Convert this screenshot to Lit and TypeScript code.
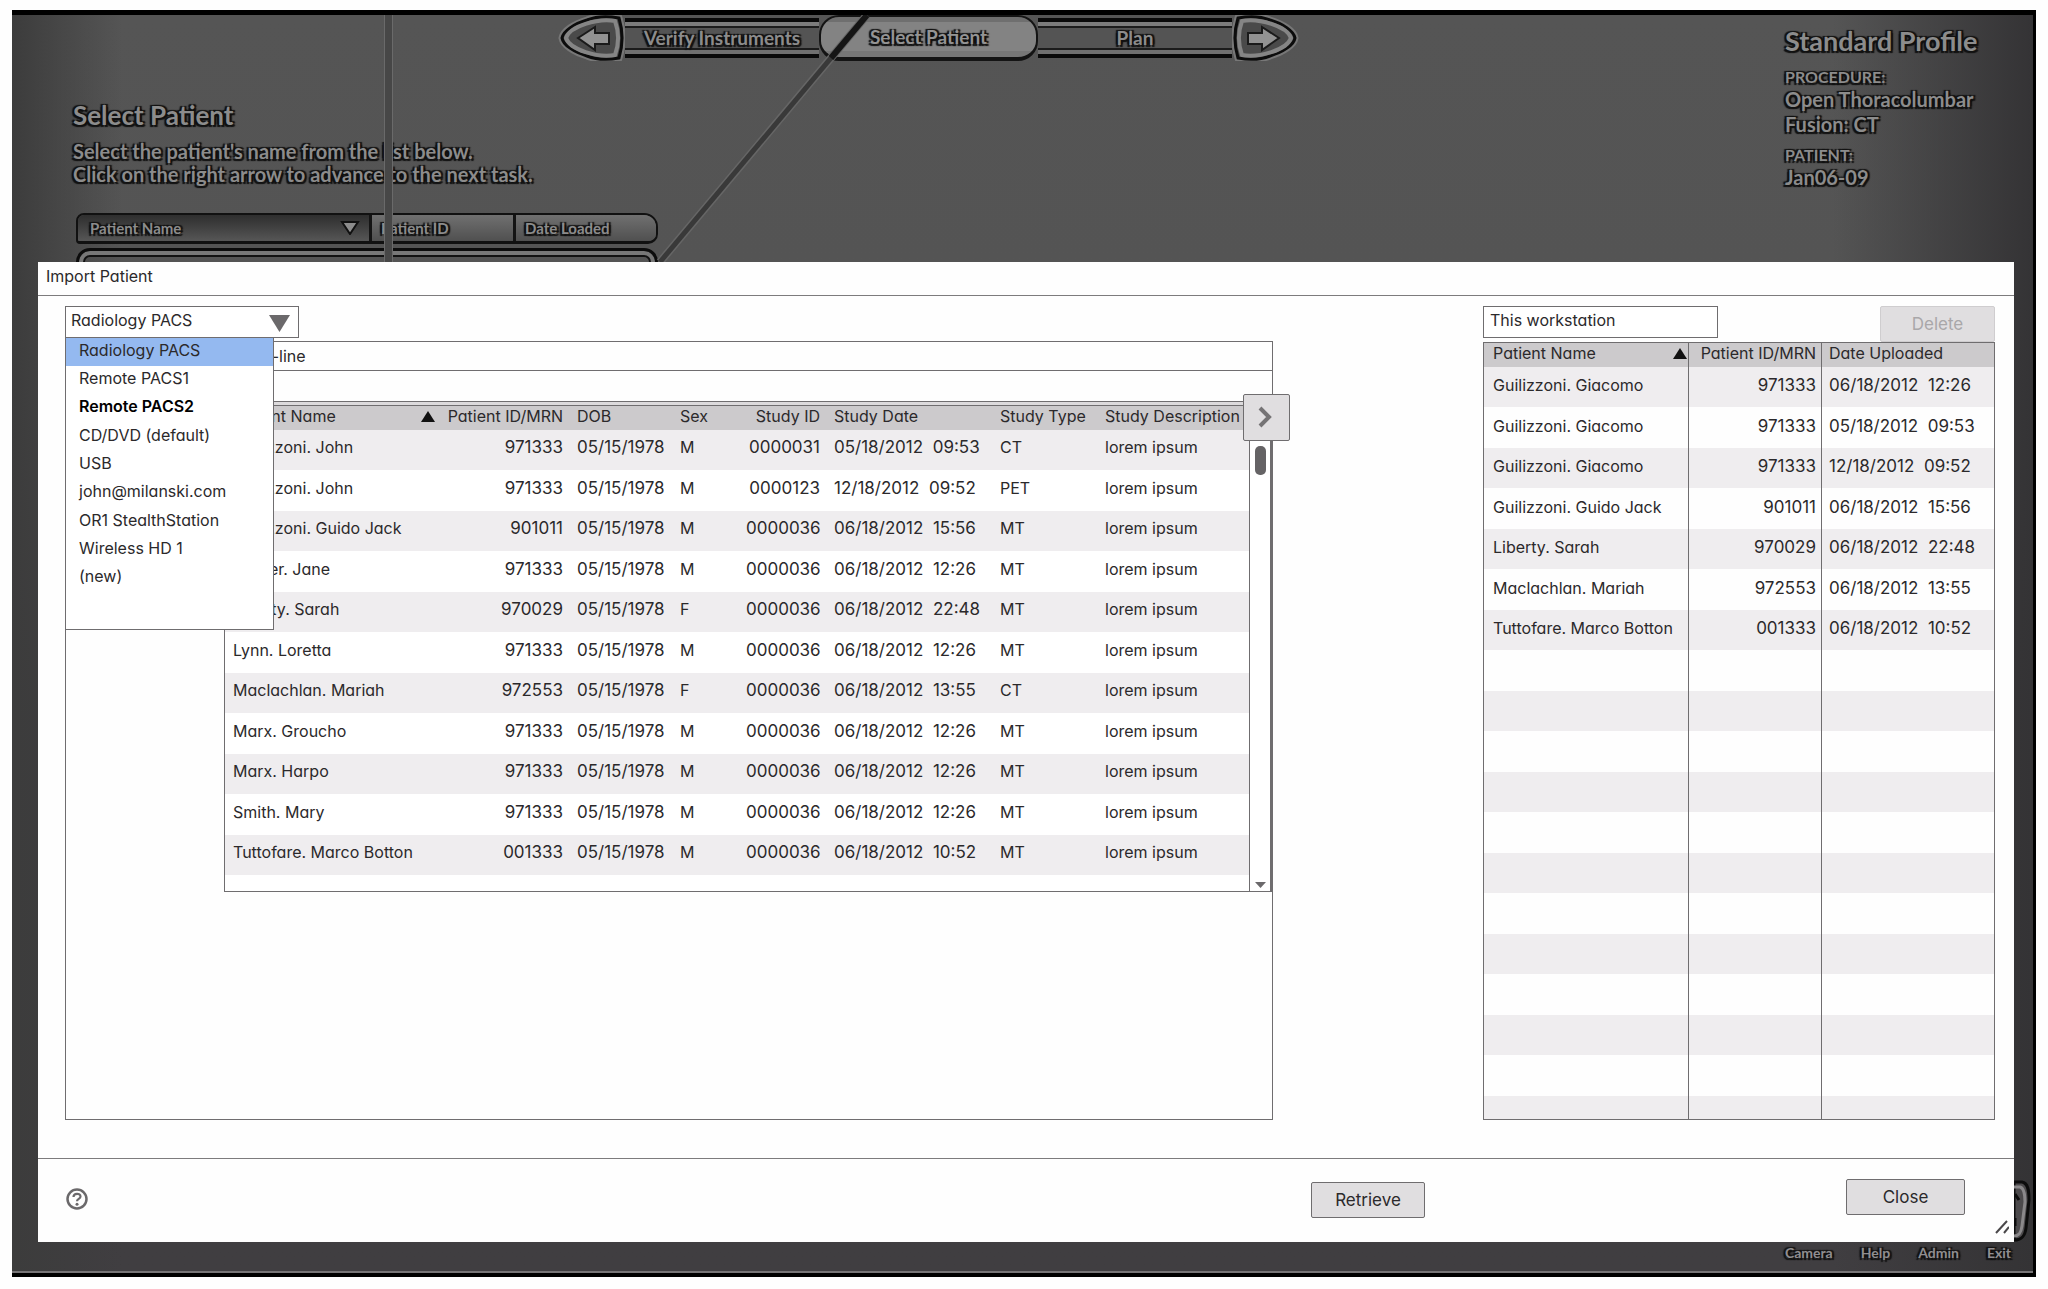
import { LitElement, html, css, svg, nothing } from "lit";
import { customElement, state, property } from "lit/decorators.js";
import { classMap } from "lit/directives/class-map.js";

type Study = [string, string, string, string, string, string, string];

const STUDIES: Study[] = [
  ["Guilizzoni. John", "971333", "M", "0000031", "05/18/2012", "09:53", "CT"],
  ["Guilizzoni. John", "971333", "M", "0000123", "12/18/2012", "09:52", "PET"],
  ["Guilizzoni. Guido Jack", "901011", "M", "0000036", "06/18/2012", "15:56", "MT"],
  ["Hunter. Jane", "971333", "M", "0000036", "06/18/2012", "12:26", "MT"],
  ["Liberty. Sarah", "970029", "F", "0000036", "06/18/2012", "22:48", "MT"],
  ["Lynn. Loretta", "971333", "M", "0000036", "06/18/2012", "12:26", "MT"],
  ["Maclachlan. Mariah", "972553", "F", "0000036", "06/18/2012", "13:55", "CT"],
  ["Marx. Groucho", "971333", "M", "0000036", "06/18/2012", "12:26", "MT"],
  ["Marx. Harpo", "971333", "M", "0000036", "06/18/2012", "12:26", "MT"],
  ["Smith. Mary", "971333", "M", "0000036", "06/18/2012", "12:26", "MT"],
  ["Tuttofare. Marco Botton", "001333", "M", "0000036", "06/18/2012", "10:52", "MT"],
];

const UPLOADS: [string, string, string, string][] = [
  ["Guilizzoni. Giacomo", "971333", "06/18/2012", "12:26"],
  ["Guilizzoni. Giacomo", "971333", "05/18/2012", "09:53"],
  ["Guilizzoni. Giacomo", "971333", "12/18/2012", "09:52"],
  ["Guilizzoni. Guido Jack", "901011", "06/18/2012", "15:56"],
  ["Liberty. Sarah", "970029", "06/18/2012", "22:48"],
  ["Maclachlan. Mariah", "972553", "06/18/2012", "13:55"],
  ["Tuttofare. Marco Botton", "001333", "06/18/2012", "10:52"],
];

const BLANK_ROWS = 12;

const SOURCES = [
  "Radiology PACS",
  "Remote PACS1",
  "Remote PACS2",
  "CD/DVD (default)",
  "USB",
  "john@milanski.com",
  "OR1 StealthStation",
  "Wireless HD 1",
  "(new)",
];

const sketchText = css`
  :host,
  button,
  input,
  select {
    font-family: Inter, "Liberation Sans", sans-serif;
    font-feature-settings: "cv11";
    font-size: 16px;
    line-height: 20px;
    color: #2b292b;
  }
  button,
  input,
  select {
    margin: 0;
    box-sizing: border-box;
  }
`;

const tableText = css`
  table {
    border-collapse: separate;
    border-spacing: 0;
    table-layout: fixed;
    width: 100%;
  }
  th,
  td {
    box-sizing: border-box;
    padding: 0 7px;
    text-align: left;
    font-weight: 400;
    white-space: pre;
  }
  th {
    height: 24px;
    padding-bottom: 4px;
    background: #cccacc;
  }
  td {
    height: 40px;
    padding-bottom: 4px;
  }
  tbody tr:nth-child(even) td {
    height: 41px;
  }
  tbody tr:nth-child(odd) td {
    background: #efedef;
  }
  .num {
    text-align: right;
  }
  .digits {
    font-size: 17px;
  }
  .sorted {
    display: flex;
    justify-content: space-between;
    align-items: center;
  }
`;

const sortMark = html`<svg width="14" height="12" viewBox="0 0 14 12" aria-hidden="true">
  <path d="M7 1 14 12H0Z" fill="#111" />
</svg>`;

@customElement("stealth-backdrop")
export class StealthBackdrop extends LitElement {
  static styles = css`
    :host {
      display: block;
      position: relative;
      height: 247px;
      overflow: hidden;
      font-family: Lato, "Open Sans", sans-serif;
      color: #8c8c8c;
    }
    .layout {
      display: grid;
      grid-template-columns: 546px 741px 1fr 248px;
      grid-template-rows: 65px 1fr;
    }
    h1,
    h2,
    p {
      margin: 0;
    }
    h1,
    h2,
    p,
    th,
    .step {
      text-shadow:
        -2px -1px 1px #111,
        2px -1px 1px #111,
        -2px 2px 1px #111,
        2px 2px 1px #111;
    }
    .nav {
      grid-area: 1 / 2;
      display: flex;
      align-items: center;
      align-self: start;
      height: 46px;
    }
    .nav button {
      padding: 0;
      border: 0;
      background: none;
      color: inherit;
      font-family: inherit;
    }
    .arrow {
      flex: none;
      width: 67px;
      height: 46px;
    }
    .arrow svg {
      display: block;
    }
    .nav .step {
      flex: 1;
      height: 40px;
      box-sizing: border-box;
      border: solid #0a0a0a;
      border-width: 4px 0;
      background: linear-gradient(#7c7c7c 0 4px, #1c1c1c 4px 6px, #545454 6px 26px, #1c1c1c 26px 28px, #707070 28px);
      font-size: 19px;
      font-weight: 700;
      line-height: 28px;
    }
    .nav .current {
      flex: 0 0 219px;
      height: 46px;
      border: 2px solid #141414;
      border-bottom-width: 4px;
      border-radius: 20px;
      background: linear-gradient(#6f6f6f 0 5px, #838383 5px 34px, #777 34px);
      color: #949494;
    }
    .intro {
      grid-area: 2 / 1 / 3 / 3;
      padding: 17px 0 0 61px;
    }
    h1 {
      font-size: 26px;
      line-height: 36px;
      font-weight: 700;
    }
    .hint {
      font-size: 20px;
      line-height: 23px;
      font-weight: 700;
      padding-top: 7px;
    }
    table {
      width: 582px;
      margin: 27px 0 0 3px;
      border-collapse: separate;
      border-spacing: 0;
      table-layout: fixed;
      border: 2px solid #111;
      border-bottom-width: 3px;
      border-radius: 8px 14px 10px 4px;
      overflow: hidden;
    }
    th {
      height: 26px;
      box-sizing: border-box;
      padding: 0 9px;
      background: linear-gradient(#707070, #505050);
      border-right: 3px solid #141414;
      text-align: left;
      font-size: 15px;
      line-height: 20px;
      font-weight: 700;
    }
    th:first-child {
      background: linear-gradient(#2e2e2e, #565656);
      padding-left: 12px;
    }
    th:last-child {
      border-right: 0;
    }
    .sorted {
      display: flex;
      justify-content: space-between;
      align-items: center;
    }
    .list {
      width: 582px;
      height: 40px;
      box-sizing: border-box;
      margin: 4px 0 0 3px;
      border: 3px solid #0c0c0c;
      border-radius: 14px;
      box-shadow: inset 0 0 0 4px #777, inset 0 0 0 6px #111;
    }
    .profile {
      grid-area: 1 / 4 / 3 / 5;
      padding-top: 8px;
    }
    h2 {
      font-size: 27px;
      line-height: 36px;
      font-weight: 700;
    }
    .cap {
      font-size: 16px;
      line-height: 20px;
      font-weight: 700;
      padding-top: 8px;
    }
    .value {
      font-size: 20px;
      line-height: 25px;
      font-weight: 700;
    }
    .creases {
      position: absolute;
      inset: 0;
      width: 100%;
      height: 100%;
      pointer-events: none;
    }
  `;

  private arrow(flip: boolean) {
    const shape = svg`
      <path d="M61 3C50 1 39 1 29 5 16 9 5 16 4 23 5 30 16 37 29 41 39 45 50 45 61 43 65 30 65 16 61 3Z" fill="#555" stroke="#777" stroke-width="7"/>
      <path d="M61 3C50 1 39 1 29 5 16 9 5 16 4 23 5 30 16 37 29 41 39 45 50 45 61 43 65 30 65 16 61 3Z" fill="#4c4c4c" stroke="#0c0c0c" stroke-width="3"/>
      <path d="M57 6C40 3 12 11 8 23 12 35 40 43 57 40 61 29 61 17 57 6Z" fill="#4a4a4a" stroke="#858585" stroke-width="4"/>
      <path d="M20 23 37 12V18H51V29H37V35Z" fill="#929292" stroke="#1a1a1a" stroke-width="2"/>`;
    return html`<svg width="67" height="46" viewBox="0 0 67 46" aria-hidden="true">
      <g transform=${flip ? "translate(67 0) scale(-1 1)" : "translate(0 0)"}>${shape}</g>
    </svg>`;
  }

  render() {
    return html`
      <div class="layout">
        <nav class="nav" aria-label="Procedure steps">
          <button class="arrow" aria-label="Previous task">${this.arrow(false)}</button>
          <button class="step">Verify Instruments</button>
          <button class="step current" aria-current="step">Select Patient</button>
          <button class="step">Plan</button>
          <button class="arrow" aria-label="Next task">${this.arrow(true)}</button>
        </nav>
        <section class="intro">
          <h1>Select Patient</h1>
          <p class="hint">
            Select the patient's name from the list below.<br />Click on the right arrow to advance to the next task.
          </p>
          <table>
            <colgroup>
              <col width="294" />
              <col width="144" />
              <col />
            </colgroup>
            <thead>
              <tr>
                <th scope="col">
                  <span class="sorted"
                    >Patient Name
                    <svg width="20" height="14" viewBox="0 0 20 14" aria-hidden="true">
                      <path d="M2 1H18L10 13Z" fill="#8c8c8c" stroke="#111" stroke-width="2" /></svg
                  ></span>
                </th>
                <th scope="col">Patient ID</th>
                <th scope="col">Date Loaded</th>
              </tr>
            </thead>
          </table>
          <div class="list"></div>
        </section>
        <section class="profile">
          <h2>Standard Profile</h2>
          <p class="cap">PROCEDURE:</p>
          <p class="value">Open Thoracolumbar<br />Fusion: CT</p>
          <p class="cap">PATIENT:</p>
          <p class="value">Jan06-09</p>
        </section>
      </div>
      <svg class="creases" aria-hidden="true">
        <rect x="372" y="0" width="9" height="247" fill="#6a6a6a" />
        <rect x="373" y="0" width="7" height="247" fill="#474747" />
        <path d="M855 0 648 247" stroke="#666" stroke-width="8" />
        <path d="M855 0 648 247" stroke="#393939" stroke-width="5" />
        <path d="M855 0 819 43" stroke="#151515" stroke-width="6" />
      </svg>
    `;
  }
}

@customElement("source-picker")
export class SourcePicker extends LitElement {
  @state() private open = true;
  @state() private value = SOURCES[0];

  static styles = [
    sketchText,
    css`
      :host {
        display: block;
        position: relative;
        width: 234px;
      }
      select {
        appearance: none;
        display: block;
        width: 100%;
        height: 32px;
        padding: 0 40px 4px 5px;
        border: 1px solid #6f6d6f;
        border-radius: 0;
        background: #fff;
      }
      .mark {
        position: absolute;
        top: 9px;
        right: 9px;
        pointer-events: none;
      }
      .popup {
        position: absolute;
        z-index: 2;
        top: 31px;
        left: 0;
        width: 209px;
        height: 293px;
        box-sizing: border-box;
        margin: 0;
        padding: 0;
        border: 1px solid #6f6d6f;
        background: #fff;
        list-style: none;
      }
      .item {
        padding: 2px 13px 6px;
        white-space: nowrap;
      }
      .item:nth-child(3n) {
        padding-bottom: 7px;
      }
      .active {
        background: #94b9f0;
      }
      .strong {
        font-weight: 600;
        color: #000;
      }
    `,
  ];

  render() {
    return html`
      <select
        aria-label="Import source"
        .value=${this.value}
        @mousedown=${(e: Event) => {
          e.preventDefault();
          this.open = !this.open;
        }}
        @change=${(e: Event) => (this.value = (e.target as HTMLSelectElement).value)}
      >
        ${SOURCES.map((s) => html`<option ?selected=${s === this.value}>${s}</option>`)}
      </select>
      <svg class="mark" width="21" height="17" viewBox="0 0 21 17" aria-hidden="true">
        <path d="M0 0H21L10.500 17Z" fill="#6b696b" />
      </svg>
      ${this.open
        ? html`<ul class="popup" role="listbox" aria-label="Import sources">
            ${SOURCES.map(
              (s) => html`<li
                class=${classMap({ item: true, active: s === this.value, strong: s === "Remote PACS2" })}
                role="option"
                aria-selected=${s === this.value}
                @click=${() => {
                  this.value = s;
                  this.open = false;
                }}
              >
                ${s}
              </li>`
            )}
          </ul>`
        : nothing}
    `;
  }
}

@customElement("study-list")
export class StudyList extends LitElement {
  @property({ attribute: false }) studies: Study[] = [];

  static styles = [
    sketchText,
    tableText,
    css`
      :host {
        display: block;
        position: relative;
        padding-top: 3px;
        border-top: 1px solid #6f6d6f;
        background: #dcdadc;
      }
      .grid {
        display: grid;
        grid-template-columns: 1fr 21px;
        border: 1px solid #6f6d6f;
        border-right-width: 2px;
        background: #fff;
      }
      .rows {
        padding-bottom: 16px;
        overflow: hidden;
      }
      td {
        padding-bottom: 6px;
      }
      th:first-child,
      td:first-child {
        padding-left: 8px;
        padding-right: 0;
      }
      th:last-child {
        padding-right: 0;
      }
      .scroll {
        display: flex;
        flex-direction: column;
        align-items: center;
        justify-content: space-between;
        padding: 40px 0 3px;
        border-left: 1px solid #6f6d6f;
      }
      .thumb {
        width: 11px;
        height: 29px;
        border-radius: 5px;
        background: #656365;
      }
      .send {
        position: absolute;
        top: -8px;
        right: -18px;
        width: 47px;
        height: 47px;
        padding: 0;
        border: 1px solid #6f6d6f;
        border-radius: 2px;
        background: #e0dee0;
      }
      .send svg {
        display: block;
        margin: 0 auto 2px 13px;
      }
    `,
  ];

  render() {
    return html`
      <div class="grid">
        <div class="rows">
          <table>
            <colgroup>
              <col width="210" />
              <col width="135" />
              <col width="103" />
              <col width="66" />
              <col width="88" />
              <col width="166" />
              <col width="105" />
              <col />
            </colgroup>
            <thead>
              <tr>
                <th scope="col"><span class="sorted">Patient Name ${sortMark}</span></th>
                <th scope="col" class="num">Patient ID/MRN</th>
                <th scope="col">DOB</th>
                <th scope="col">Sex</th>
                <th scope="col" class="num">Study ID</th>
                <th scope="col">Study Date</th>
                <th scope="col">Study Type</th>
                <th scope="col">Study Description</th>
              </tr>
            </thead>
            <tbody>
              ${this.studies.map(
                ([name, id, sex, study, day, time, type]) => html`<tr>
                  <td>${name}</td>
                  <td class="num digits">${id}</td>
                  <td class="digits">05/15/1978</td>
                  <td>${sex}</td>
                  <td class="num digits">${study}</td>
                  <td class="digits">${day}  ${time}</td>
                  <td>${type}</td>
                  <td>lorem ipsum</td>
                </tr>`
              )}
            </tbody>
          </table>
        </div>
        <div class="scroll">
          <div class="thumb"></div>
          <svg width="11" height="6" viewBox="0 0 11 6" aria-hidden="true">
            <path d="M0 0H11L5.500 6Z" fill="#6b696b" />
          </svg>
        </div>
      </div>
      <button class="send" aria-label="Send to this workstation">
        <svg width="16" height="22" viewBox="0 0 16 22" aria-hidden="true">
          <path d="M3 2 12 11 3 20" fill="none" stroke="#757375" stroke-width="4" />
        </svg>
      </button>
    `;
  }
}

@customElement("upload-list")
export class UploadList extends LitElement {
  static styles = [
    sketchText,
    tableText,
    css`
      :host {
        display: block;
        position: relative;
        overflow: hidden;
        border: 1px solid #6f6d6f;
      }
      .sheet {
        position: absolute;
        inset: 0;
        overflow: hidden;
      }
      th:not(:last-child),
      td:not(:last-child) {
        border-right: 1px solid #6f6d6f;
      }
      th:first-child,
      td:first-child {
        padding-left: 9px;
        padding-right: 1px;
      }
      .num {
        padding-left: 0;
        padding-right: 5px;
      }
    `,
  ];

  render() {
    return html`<div class="sheet">
      <table>
        <colgroup>
          <col width="205" />
          <col width="133" />
          <col />
        </colgroup>
        <thead>
          <tr>
            <th scope="col"><span class="sorted">Patient Name ${sortMark}</span></th>
            <th scope="col" class="num">Patient ID/MRN</th>
            <th scope="col">Date Uploaded</th>
          </tr>
        </thead>
        <tbody>
          ${UPLOADS.map(
            ([name, id, day, time]) => html`<tr>
              <td>${name}</td>
              <td class="num digits">${id}</td>
              <td class="digits">${day}  ${time}</td>
            </tr>`
          )}
          ${Array.from({ length: BLANK_ROWS }, () => html`<tr><td></td><td></td><td></td></tr>`)}
        </tbody>
      </table>
    </div>`;
  }
}

@customElement("import-dialog")
export class ImportDialog extends LitElement {
  static styles = [
    sketchText,
    css`
      :host {
        display: flex;
        flex-direction: column;
        position: relative;
        background: #fefefe;
      }
      .title {
        margin: 0;
        padding: 4px 8px 9px;
        border-bottom: 1px solid #7d7b7d;
        font-size: 16px;
        line-height: 20px;
        font-weight: 400;
      }
      .body {
        flex: 1;
        display: grid;
        grid-template-columns: 1fr 512px;
        column-gap: 210px;
        padding: 10px 19px 38px 27px;
      }
      .side {
        display: flex;
        flex-direction: column;
      }
      .panel {
        flex: 1;
        margin-top: 3px;
        border: 1px solid #6f6d6f;
      }
      .status {
        margin: 0 0 30px;
        padding: 4px 0 4px 184px;
        border-bottom: 1px solid #6f6d6f;
      }
      study-list {
        margin-left: 158px;
      }
      .tools {
        display: flex;
        justify-content: space-between;
        align-items: flex-start;
        height: 36px;
      }
      .name {
        width: 235px;
        height: 32px;
        padding: 0 6px 4px;
        border: 1px solid #6f6d6f;
        background: #fff;
      }
      button {
        height: 36px;
        padding: 0 6px;
        border: 1px solid #6f6d6f;
        border-radius: 2px;
        background: #e0dee0;
        font-size: 17px;
      }
      .delete {
        width: 115px;
        border-color: #cfcdcf;
        color: #a9a7a9;
      }
      upload-list {
        flex: 1;
      }
      .footer {
        display: flex;
        align-items: flex-start;
        height: 83px;
        padding: 0 49px 0 28px;
        border-top: 1px solid #7d7b7d;
      }
      .footer .help {
        width: 22px;
        height: 22px;
        margin: 29px auto 0 0;
        padding: 0;
        border: 0;
        background: none;
      }
      .retrieve {
        width: 114px;
        margin: 23px 421px 0 0;
      }
      .close {
        width: 119px;
        margin-top: 20px;
      }
      .help svg {
        display: block;
      }
      .grip {
        position: absolute;
        right: 5px;
        bottom: 8px;
      }
      .device {
        position: absolute;
        left: 100%;
        bottom: 0;
      }
    `,
  ];

  render() {
    return html`
      <h2 class="title">Import Patient</h2>
      <div class="body">
        <section class="side">
          <source-picker></source-picker>
          <div class="panel">
            <p class="status">On-line</p>
            <study-list .studies=${STUDIES}></study-list>
          </div>
        </section>
        <section class="side">
          <div class="tools">
            <input class="name" aria-label="Destination" value="This workstation" />
            <button class="delete" disabled>Delete</button>
          </div>
          <upload-list></upload-list>
        </section>
      </div>
      <div class="footer">
        <button class="help" aria-label="Help">
          <svg width="22" height="22" viewBox="0 0 22 22" aria-hidden="true">
            <circle cx="11" cy="11" r="9.500" fill="none" stroke="#6b696b" stroke-width="2.500" />
            <path
              d="M7.500 9C7.500 4.800 14.500 4.800 14.500 8.600 14.500 11 11 10.800 11 13.200"
              fill="none"
              stroke="#6b696b"
              stroke-width="2.200"
            />
            <circle cx="11" cy="16.200" r="1.500" fill="#6b696b" />
          </svg>
        </button>
        <button class="retrieve">Retrieve</button>
        <button class="close">Close</button>
      </div>
      <svg class="grip" width="14" height="14" viewBox="0 0 14 14" aria-hidden="true">
        <path d="M1 13 12 1M9 13 14 7" fill="none" stroke="#4a484a" stroke-width="2" />
      </svg>
      <svg class="device" width="18" height="62" viewBox="0 0 18 62" aria-hidden="true">
        <path d="M0 2H8C14 3 15 10 15 20L12 48C11 56 8 60 0 60Z" fill="#4c4a4c" stroke="#0c0c0c" stroke-width="3" />
        <path d="M0 7H6C10 8 11 14 11 22L8 46C7 53 5 56 0 56" fill="none" stroke="#8a888a" stroke-width="3" />
        <path d="M1 14 5 20M1 38V46" fill="none" stroke="#0c0c0c" stroke-width="3" />
      </svg>
    `;
  }
}

@customElement("app-root")
export class AppRoot extends LitElement {
  static styles = css`
    :host {
      display: block;
      box-sizing: border-box;
      min-height: 100vh;
      padding: 10px 12px 12px;
      background: #fefefe;
    }
    .frame {
      display: flex;
      flex-direction: column;
      box-sizing: border-box;
      min-height: calc(100vh - 22px);
      border: solid #000;
      border-width: 5px 3px 4px 0;
      background:
        linear-gradient(90deg, #3c3c3c 0, transparent 110px calc(100% - 200px), #343335 100%),
        linear-gradient(#555 0, #545454 250px, #3f3d40 700px, #403e41 100%);
    }
    import-dialog {
      flex: 1;
      margin: 0 19px 0 26px;
    }
    .taskbar {
      display: flex;
      justify-content: flex-end;
      gap: 28px;
      height: 29px;
      padding-right: 22px;
      border-bottom: 2px solid #777577;
    }
    .taskbar a {
      font-family: Lato, "Open Sans", sans-serif;
      font-size: 14px;
      line-height: 22px;
      font-weight: 700;
      color: #908e90;
      text-decoration: none;
      text-shadow:
        -2px -1px 1px #111,
        2px -1px 1px #111,
        -2px 2px 1px #111,
        2px 2px 1px #111;
    }
  `;

  render() {
    return html`
      <div class="frame">
        <stealth-backdrop></stealth-backdrop>
        <import-dialog role="dialog" aria-label="Import Patient"></import-dialog>
        <nav class="taskbar" aria-label="System">
          <a href="#camera">Camera</a>
          <a href="#help">Help</a>
          <a href="#admin">Admin</a>
          <a href="#exit">Exit</a>
        </nav>
      </div>
    `;
  }
}
